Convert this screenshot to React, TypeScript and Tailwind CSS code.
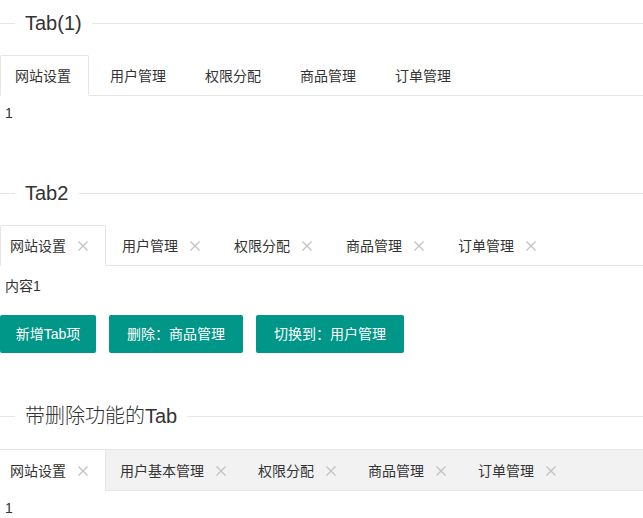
import React from "react"

const FONT = { fontFamily: '"Liberation Sans", "Noto Sans CJK SC", sans-serif' }

function Legend({ title, className = "" }: { title: string; className?: string }) {
  return (
    <div className={`flex h-[29px] items-center ${className}`}>
      <div className="h-px w-[15px] bg-[#e6e6e6]" />
      <span className="px-[10px] text-[20px] font-light leading-[29px] text-[#333]">{title}</span>
      <div className="h-px flex-1 bg-[#e6e6e6]" />
    </div>
  )
}

function CloseX() {
  return (
    <svg width="10" height="10" viewBox="0 0 10 10" className="ml-[12px] shrink-0">
      <path d="M0.5 0.5L9.5 9.5M9.5 0.5L0.5 9.5" stroke="#c2c2c2" strokeWidth="1.3" fill="none" />
    </svg>
  )
}

const tabs1 = ["网站设置", "用户管理", "权限分配", "商品管理", "订单管理"]
const tabs3 = ["网站设置", "用户基本管理", "权限分配", "商品管理", "订单管理"]
const buttons = [
  { label: "新增Tab项", w: "w-[96px]" },
  { label: "删除：商品管理", w: "w-[134px]" },
  { label: "切换到：用户管理", w: "w-[148px]" },
]

export default function App() {
  return (
    <div className="min-h-screen bg-white text-sm text-[#333]" style={FONT}>
      {/* ── Tab(1) ─────────────────────────────────── */}
      <Legend title="Tab(1)" className="mt-[9px]" />
      <ul className="mt-[17px] flex h-[41px] gap-[6px] border-b border-[#e6e6e6]">
        {tabs1.map((t, i) => (
          <li
            key={t}
            className={
              i === 0
                ? "flex h-[41px] items-center rounded-t-[2px] border border-[#e6e6e6] border-b-white bg-white pl-[14px] pr-[17px]"
                : "flex h-[41px] items-center pl-[15px] pr-[18px]"
            }
          >
            {t}
          </li>
        ))}
      </ul>
      <div className="pl-[5px] pt-[7px] leading-5">1</div>

      {/* ── Tab2 ───────────────────────────────────── */}
      <Legend title="Tab2" className="mt-[56px]" />
      <ul className="mt-[17px] flex h-[41px] gap-[6px] border-b border-[#e6e6e6]">
        {tabs1.map((t, i) => (
          <li
            key={t}
            className={
              i === 0
                ? "flex h-[41px] items-center rounded-t-[2px] border border-[#e6e6e6] border-b-white bg-white pl-[9px] pr-[17px]"
                : "flex h-[41px] items-center pl-[10px] pr-[18px]"
            }
          >
            {t}
            <CloseX />
          </li>
        ))}
      </ul>
      <div className="pl-[5px] pt-[10px] leading-5">内容1</div>
      <div className="mt-[19px] flex gap-[13px]">
        {buttons.map((b) => (
          <button
            key={b.label}
            className={`h-[38px] ${b.w} rounded-[2px] bg-[#009688] text-center text-sm leading-[38px] text-white`}
          >
            {b.label}
          </button>
        ))}
      </div>

      {/* ── 带删除功能的Tab ─────────────────────────── */}
      <Legend title="带删除功能的Tab" className="mt-[49px]" />
      <div className="mt-[18px]">
        <ul className="flex h-[42px] gap-[4px] border-y border-[#e6e6e6] bg-[#f2f2f2]">
          {tabs3.map((t, i) => (
            <li
              key={t}
              className={
                i === 0
                  ? "flex h-[41px] items-center border-r border-[#e6e6e6] bg-white pl-[10px] pr-[17px]"
                  : "flex h-[41px] items-center pl-[10px] pr-[18px]"
              }
            >
              {t}
              <CloseX />
            </li>
          ))}
        </ul>
        <div className="pl-[5px] pt-[7px] leading-5">1</div>
      </div>
    </div>
  )
}
